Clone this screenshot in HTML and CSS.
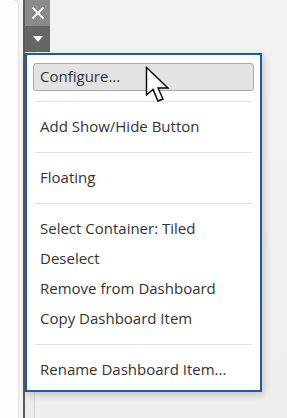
FILE: index.html
```html
<!DOCTYPE html>
<html>
<head>
<meta charset="utf-8">
<link rel="stylesheet" href="styles.css">
</head>
<body>
<div class="stage">
  <div class="panel-left"></div>
  <div class="gutter"></div>
  <div class="divider"></div>
  <div class="zone"></div>
  <div class="canvas"></div>

  <div class="tools">
    <div class="tool tool-close">
      <svg width="14" height="14" viewBox="0 0 14 14"><path d="M1.5 1.5 L12.5 12.5 M12.5 1.5 L1.5 12.5" stroke="#fff" stroke-width="1.8" fill="none"/></svg>
    </div>
    <div class="tool tool-more">
      <svg width="10" height="6" viewBox="0 0 10 6"><path d="M0 0 H10 L5 6 Z" fill="#fff"/></svg>
    </div>
  </div>

  <div class="menu">
    <div class="item item-active">Configure...</div>
    <div class="sep"></div>
    <div class="item">Add Show/Hide Button</div>
    <div class="sep"></div>
    <div class="item">Floating</div>
    <div class="sep"></div>
    <div class="item">Select Container: Tiled</div>
    <div class="item">Deselect</div>
    <div class="item">Remove from Dashboard</div>
    <div class="item">Copy Dashboard Item</div>
    <div class="sep"></div>
    <div class="item">Rename Dashboard Item...</div>
  </div>

  <svg class="cursor" width="28" height="40" viewBox="0 0 28 40">
    <path d="M1.5 1.5 L1.5 29 L8 23.5 L13 35 L18 33 L13 22 L23 22 Z" fill="#fff" stroke="#000" stroke-width="1.4" stroke-linejoin="miter"/>
  </svg>
</div>
</body>
</html>
```
FILE: styles.css
```css
html, body {
  margin: 0;
  padding: 0;
}
body {
  width: 287px;
  height: 418px;
  overflow: hidden;
  background: #f1f1f1;
  font-family: "Open Sans", "Liberation Sans", sans-serif;
}
.stage {
  position: relative;
  width: 287px;
  height: 418px;
  display: flex;
}
.panel-left {
  width: 18px;
  background: #fdfdfd;
  border-right: 1px solid #e2e2e2;
  border-top-right-radius: 6px;
}
.gutter {
  width: 4px;
  background: #f4f4f4;
}
.divider {
  width: 2px;
  background: #5a5a5a;
}
.zone {
  width: 9px;
  background: #ececec;
  border-right: 1px solid #d6d6d6;
}
.canvas {
  flex: 1;
  background: linear-gradient(#f3f3f3, #efefef);
}
.tools {
  position: absolute;
  left: 25px;
  top: 0;
  width: 25px;
  display: flex;
  flex-direction: column;
}
.tool {
  height: 26px;
  display: flex;
  align-items: center;
  justify-content: center;
}
.tool-close {
  background: #8a8a8a;
}
.tool-more {
  background: #666666;
}
.menu {
  position: absolute;
  left: 25px;
  top: 53px;
  width: 221px;
  background: #fff;
  border: 2px solid #1f5aa3;
  padding: 8px 6px 5px 6px;
  box-shadow: 2px 3px 8px rgba(0,0,0,0.18);
  display: flex;
  flex-direction: column;
}
.item {
  height: 29px;
  line-height: 29px;
  padding: 0 0 1px 7px;
  font-size: 15px;
  color: #333;
  white-space: nowrap;
}
.item-active {
  height: 25px;
  line-height: 25px;
  background: #e3e3e3;
  border: 1px solid #a9a9a9;
  border-radius: 3px;
  padding: 0 0 1px 6px;
}
.sep {
  height: 1px;
  background: #e1e1e1;
  margin: 10px 2px;
}
.cursor {
  position: absolute;
  left: 145px;
  top: 66px;
}
```
